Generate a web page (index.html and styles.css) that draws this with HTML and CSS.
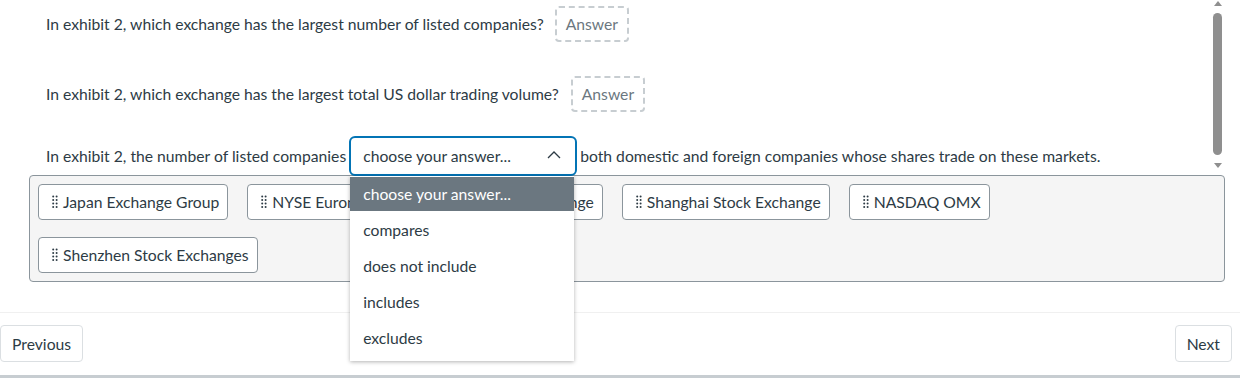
FILE: index.html
```html
<!DOCTYPE html>
<html lang="en">
<head>
    <meta charset="UTF-8">
    <meta name="viewport" content="width=device-width, initial-scale=1.0">
    <title>Exhibit 2 quiz</title>
    <link rel="stylesheet" href="styles.css">
</head>
<body>
    <!-- Preguntas -->
    <section class="questions">
        <div class="question">
            <span>In exhibit 2, which exchange has the largest number of listed companies?</span>
            <span class="blank">Answer</span>
        </div>

        <div class="question second">
            <span>In exhibit 2, which exchange has the largest total US dollar trading volume?</span>
            <span class="blank">Answer</span>
        </div>

        <div class="question third">
            <span>In exhibit 2, the number of listed companies</span>
            <div class="select-wrap">
                <div class="select">
                    <span>choose your answer...</span>
                    <svg class="chevron" width="14" height="8" viewBox="0 0 14 8"><path d="M1 7 L7 1 L13 7" fill="none" stroke="#2d3b45" stroke-width="1.3"/></svg>
                </div>
                <ul class="menu">
                    <li class="active">choose your answer...</li>
                    <li>compares</li>
                    <li>does not include</li>
                    <li>includes</li>
                    <li>excludes</li>
                </ul>
            </div>
            <span>both domestic and foreign companies whose shares trade on these markets.</span>
        </div>

        <!-- Banco de respuestas -->
        <div class="bank">
            <span class="token"><svg class="grip" width="6" height="14" viewBox="0 0 6 14"><g fill="#2d3b45"><circle cx="1.2" cy="1.5" r="1"/><circle cx="4.6" cy="1.5" r="1"/><circle cx="1.2" cy="5" r="1"/><circle cx="4.6" cy="5" r="1"/><circle cx="1.2" cy="8.5" r="1"/><circle cx="4.6" cy="8.5" r="1"/><circle cx="1.2" cy="12" r="1"/><circle cx="4.6" cy="12" r="1"/></g></svg>Japan Exchange Group</span>
            <span class="token"><svg class="grip" width="6" height="14" viewBox="0 0 6 14"><g fill="#2d3b45"><circle cx="1.2" cy="1.5" r="1"/><circle cx="4.6" cy="1.5" r="1"/><circle cx="1.2" cy="5" r="1"/><circle cx="4.6" cy="5" r="1"/><circle cx="1.2" cy="8.5" r="1"/><circle cx="4.6" cy="8.5" r="1"/><circle cx="1.2" cy="12" r="1"/><circle cx="4.6" cy="12" r="1"/></g></svg>NYSE Euronext</span>
            <span class="token"><svg class="grip" width="6" height="14" viewBox="0 0 6 14"><g fill="#2d3b45"><circle cx="1.2" cy="1.5" r="1"/><circle cx="4.6" cy="1.5" r="1"/><circle cx="1.2" cy="5" r="1"/><circle cx="4.6" cy="5" r="1"/><circle cx="1.2" cy="8.5" r="1"/><circle cx="4.6" cy="8.5" r="1"/><circle cx="1.2" cy="12" r="1"/><circle cx="4.6" cy="12" r="1"/></g></svg>London Stock Exchange</span>
            <span class="token"><svg class="grip" width="6" height="14" viewBox="0 0 6 14"><g fill="#2d3b45"><circle cx="1.2" cy="1.5" r="1"/><circle cx="4.6" cy="1.5" r="1"/><circle cx="1.2" cy="5" r="1"/><circle cx="4.6" cy="5" r="1"/><circle cx="1.2" cy="8.5" r="1"/><circle cx="4.6" cy="8.5" r="1"/><circle cx="1.2" cy="12" r="1"/><circle cx="4.6" cy="12" r="1"/></g></svg>Shanghai Stock Exchange</span>
            <span class="token"><svg class="grip" width="6" height="14" viewBox="0 0 6 14"><g fill="#2d3b45"><circle cx="1.2" cy="1.5" r="1"/><circle cx="4.6" cy="1.5" r="1"/><circle cx="1.2" cy="5" r="1"/><circle cx="4.6" cy="5" r="1"/><circle cx="1.2" cy="8.5" r="1"/><circle cx="4.6" cy="8.5" r="1"/><circle cx="1.2" cy="12" r="1"/><circle cx="4.6" cy="12" r="1"/></g></svg>NASDAQ OMX</span>
            <span class="token"><svg class="grip" width="6" height="14" viewBox="0 0 6 14"><g fill="#2d3b45"><circle cx="1.2" cy="1.5" r="1"/><circle cx="4.6" cy="1.5" r="1"/><circle cx="1.2" cy="5" r="1"/><circle cx="4.6" cy="5" r="1"/><circle cx="1.2" cy="8.5" r="1"/><circle cx="4.6" cy="8.5" r="1"/><circle cx="1.2" cy="12" r="1"/><circle cx="4.6" cy="12" r="1"/></g></svg>Shenzhen Stock Exchanges</span>
        </div>

        <div class="scrollbar">
            <span class="arrow up"></span>
            <span class="thumb"></span>
            <span class="arrow down"></span>
        </div>
    </section>

    <!-- Navegación -->
    <nav class="pager">
        <button>Previous</button>
        <button>Next</button>
    </nav>
</body>
</html>
```

FILE: styles.css
```css
body {
    margin: 0;
    font-family: Lato, "Noto Sans", sans-serif;
    font-size: 15.7px;
    color: #2d3b45;
    background-color: white;
}

.questions {
    position: relative;
    padding-top: 6px;
}

.question {
    display: flex;
    align-items: center;
    gap: 11px;
    height: 36px;
    padding-left: 46px;
    white-space: nowrap;
}

.question.second {
    margin-top: 34px;
}

.question.third {
    height: 40px;
    margin-top: 24px;
    gap: 3px;
}

.blank {
    display: flex;
    align-items: center;
    height: 32px;
    padding: 0 9px;
    border: 2px dashed #c7cdd1;
    border-radius: 4px;
    color: #6b7780;
}

.second .blank {
    margin-left: 1px;
}

/* Selector desplegado */
.select-wrap {
    position: relative;
}

.select {
    display: flex;
    align-items: center;
    justify-content: space-between;
    box-sizing: border-box;
    width: 228px;
    height: 40px;
    padding: 0 14px 0 12px;
    border: 2px solid #0374b5;
    border-radius: 6px;
    background-color: white;
}

.chevron {
    margin-top: -2px;
}

.menu {
    position: absolute;
    top: 40px;
    left: 1px;
    z-index: 2;
    width: 224px;
    margin: 0;
    padding: 1px 0 5px;
    list-style: none;
    background-color: white;
    box-shadow: 0 1px 4px rgba(0, 0, 0, 0.3);
}

.menu li {
    height: 36px;
    line-height: 36px;
    padding-left: 13px;
}

.menu li.active {
    height: 34px;
    line-height: 34px;
    margin-bottom: 1px;
    background-color: #6b7780;
    color: white;
}

/* Fichas */
.bank {
    display: flex;
    flex-wrap: wrap;
    gap: 17px 19px;
    box-sizing: border-box;
    width: 1196px;
    margin: -1px 0 0 29px;
    padding: 8px;
    border: 1px solid #8b959c;
    border-radius: 4px;
    background-color: #f5f5f5;
}

.token {
    display: flex;
    align-items: center;
    gap: 5px;
    box-sizing: border-box;
    height: 36px;
    padding: 0 8px 0 13px;
    border: 1px solid #8b959c;
    border-radius: 4px;
    background-color: white;
    white-space: nowrap;
}

.grip {
    flex: none;
}

.scrollbar {
    position: absolute;
    top: 0;
    left: 1211px;
    width: 13px;
    height: 172px;
}

.thumb {
    position: absolute;
    top: 13px;
    left: 2px;
    width: 9px;
    height: 142px;
    border-radius: 5px;
    background-color: #8f8f8f;
}

.arrow {
    position: absolute;
    left: 3px;
    width: 0;
    height: 0;
    border-left: 4px solid transparent;
    border-right: 4px solid transparent;
}

.arrow.up {
    top: 1px;
    border-bottom: 5px solid #8f8f8f;
}

.arrow.down {
    top: 163px;
    border-top: 5px solid #8f8f8f;
}

/* Botones de navegación */
.pager {
    display: flex;
    justify-content: space-between;
    margin-top: 30px;
    padding: 12px 8px 13px 0;
    border-top: 1px solid #f0f0f0;
    border-bottom: 3px solid #c7cdd1;
}

.pager button {
    height: 37px;
    padding: 0 11px;
    border: 1px solid #dbdfe2;
    border-radius: 4px;
    background-color: white;
    font-family: inherit;
    font-size: 15.7px;
    color: #2d3b45;
}
```
